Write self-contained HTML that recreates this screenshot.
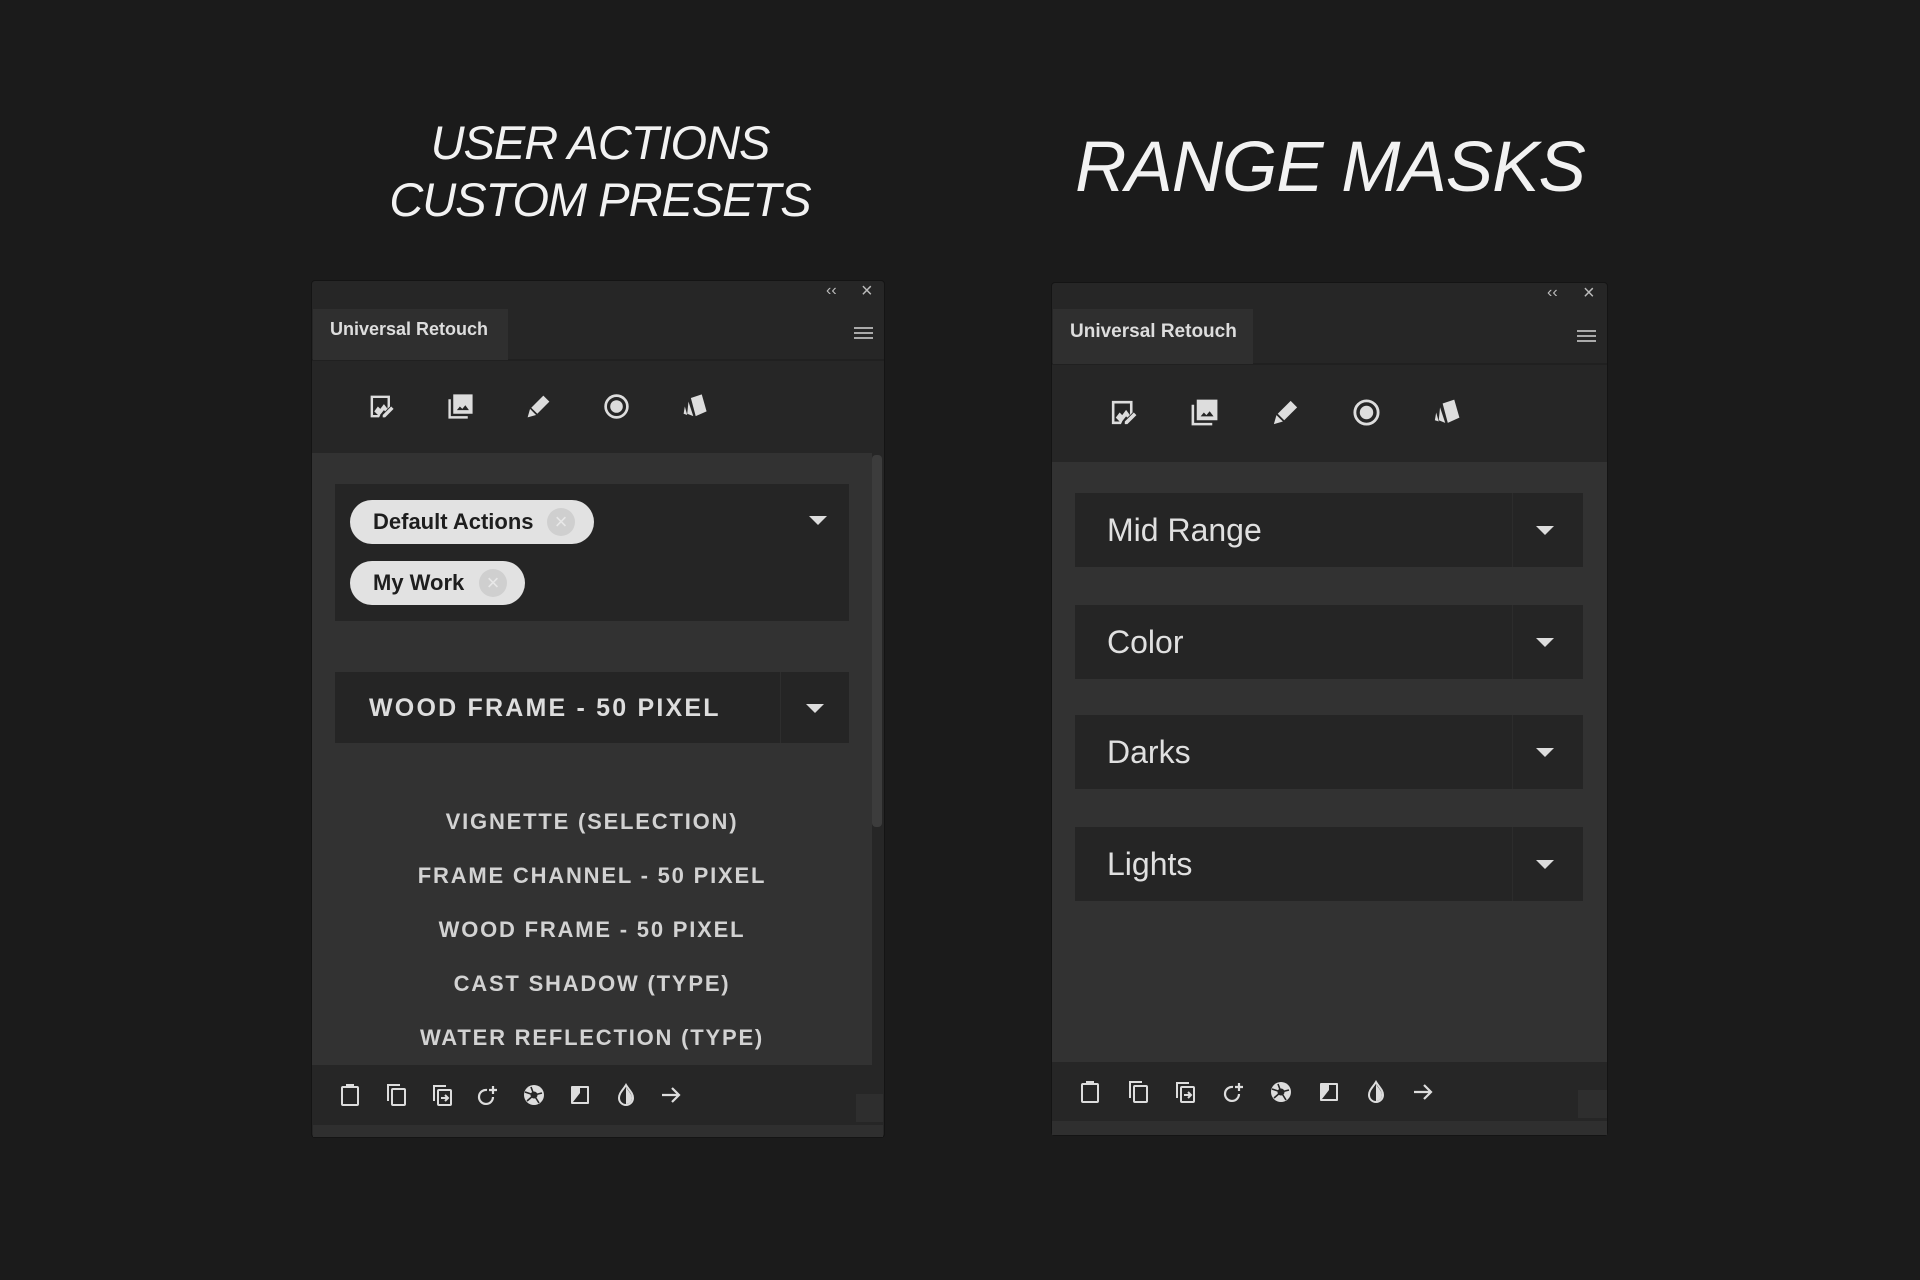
<!DOCTYPE html>
<html><head><meta charset="utf-8">
<style>
*{margin:0;padding:0;box-sizing:border-box}
body{width:1920px;height:1280px;background:#1b1b1b;position:relative;overflow:hidden;font-family:"Liberation Sans",sans-serif}
.a{position:absolute}
.title{color:#f2f2f2;font-style:italic;font-weight:300;text-align:center;letter-spacing:-1px;white-space:nowrap}
.panel{background:#262626;border:1px solid #141414;border-radius:4px}
.ui{color:#ddd;font-weight:bold}
.item{position:absolute;left:335px;width:514px;text-align:center;color:#d2d2d2;font-weight:bold;font-size:22px;letter-spacing:1.8px}
.dd{position:absolute;left:1075px;width:508px;height:74px;background:#252525}
.dd span{position:absolute;left:32px;top:0;line-height:74px;font-size:32px;color:#e0e0e0}
.dd i{position:absolute;left:437px;top:0;width:1px;height:74px;background:#2c2c2c}
.tri{position:absolute;width:0;height:0;border-left:9px solid transparent;border-right:9px solid transparent;border-top:9px solid #ddd}
svg{position:absolute}
</style></head><body>
<div class="a title" style="left:300px;width:600px;top:114px;font-size:47px;line-height:57px">USER ACTIONS<br>CUSTOM PRESETS</div>
<div class="a title" style="left:1020px;width:620px;top:125px;font-size:71px;line-height:86px">RANGE MASKS</div>

<svg width="0" height="0"><defs>
<g id="i1" fill="#ddd"><path d="M3 3h16v9l-2 2V5H5v14h6l-1 2H3z"/><path d="M6 16l3-4 2 2 3-4 3 4-2 2-1-1-4 5z"/><path d="M20 12l2 2-7 7h-2v-2z"/></g>
<g id="i2" fill="#ddd"><path d="M2 6h2v14h14v2H2z"/><path d="M6 2h16v16H6zM9 15h10l-3-4-2.5 3-2-2z" fill-rule="evenodd"/></g>
<g id="i3" fill="#ddd"><path d="M16 3l5 5-10 10-5-5z"/><path d="M5 14l5 5-7 2z"/></g>
<g id="i4"><circle cx="12" cy="12" r="9" fill="none" stroke="#ddd" stroke-width="2.2"/><circle cx="12" cy="12" r="5.2" fill="#ddd"/></g>
<g id="i5" fill="#ddd"><path d="M9 5l9-3 4 14-9 4z"/><path d="M7 8l4 12-5-2z"/><path d="M4 12l2 7-3-1z"/></g>
<g id="f1" fill="none" stroke="#ddd" stroke-width="2"><rect x="4" y="4" width="16" height="18" rx="1"/><path d="M9 4V2h6v2" fill="#ddd"/></g>
<g id="f2" fill="none" stroke="#ddd" stroke-width="2"><rect x="8" y="6" width="13" height="16" rx="1"/><path d="M4 18V2h12"/></g>
<g id="f3" fill="none" stroke="#ddd" stroke-width="2"><rect x="8" y="7" width="13" height="15" rx="1"/><path d="M4 18V3h12"/><path d="M11 15h6m-2-3l3 3-3 3"/></g>
<g id="f4" fill="none" stroke="#ddd" stroke-width="2.2"><path d="M18 14a7 7 0 1 1-6-7"/><path d="M18 3v8M14 7h8"/></g>
<g id="f5"><circle cx="12" cy="12" r="10" fill="#ddd"/><path d="M12 12L9 4M12 12l8-2M12 12l-7 6M12 12l5 8M12 12L3 9" stroke="#262626" stroke-width="1.6"/><circle cx="12" cy="12" r="3.5" fill="#262626"/></g>
<g id="f6"><rect x="3" y="3" width="18" height="18" rx="1" fill="#ddd"/><path d="M12 5h7v14h-7z" fill="#262626"/><path d="M5 19l7-9v9z" fill="#262626"/></g>
<g id="f7"><path d="M12 2C9 7 5 10 5 15a7 7 0 0 0 14 0c0-5-4-8-7-13z" fill="none" stroke="#ddd" stroke-width="2"/><path d="M12 4c2 4 6 7 6 11a6 6 0 0 1-6 6z" fill="#ddd"/></g>
<g id="f8" fill="none" stroke="#ddd" stroke-width="2.2"><path d="M3 12h17M13 5l7 7-7 7"/></g>
</defs></svg>

<!-- LEFT PANEL -->
<div class="a panel" style="left:311px;top:280px;width:574px;height:858px"></div>
<div class="a" style="left:312px;top:309px;width:572px;height:52px;background:#262626;border-bottom:2px solid #202020"></div>
<div class="a" style="left:313px;top:309px;width:195px;height:51px;background:#2f2f2f"></div>
<div class="a ui" style="left:330px;top:317px;font-size:18px;line-height:24px">Universal Retouch</div>
<div class="a" style="left:826px;top:282px;color:#bbb;font-size:16px">&lsaquo;&lsaquo;</div>
<div class="a" style="left:861px;top:280px;color:#bbb;font-size:20px">×</div>
<div class="a" style="left:854px;top:327px;width:19px;height:12px;border-top:2px solid #aaa;border-bottom:2px solid #aaa"></div>
<div class="a" style="left:854px;top:332px;width:19px;height:2px;background:#aaa"></div>
<svg style="left:367px;top:392px" width="29" height="29" viewBox="0 0 24 24"><use href="#i1"/></svg>
<svg style="left:446px;top:392px" width="29" height="29" viewBox="0 0 24 24"><use href="#i2"/></svg>
<svg style="left:524px;top:392px" width="29" height="29" viewBox="0 0 24 24"><use href="#i3"/></svg>
<svg style="left:602px;top:392px" width="29" height="29" viewBox="0 0 24 24"><use href="#i4"/></svg>
<svg style="left:680px;top:392px" width="29" height="29" viewBox="0 0 24 24"><use href="#i5"/></svg>
<div class="a" style="left:312px;top:453px;width:560px;height:612px;background:#323232"></div>
<div class="a" style="left:872px;top:455px;width:10px;height:372px;background:#3c3c3c;border-radius:4px"></div>
<div class="a" style="left:335px;top:484px;width:514px;height:137px;background:#252525"></div>
<div class="a" style="left:350px;top:500px;width:244px;height:44px;border-radius:22px;background:#e2e2e2"></div>
<div class="a" style="left:373px;top:500px;line-height:44px;font-size:22px;font-weight:bold;color:#1e1e1e">Default Actions</div>
<div class="a" style="left:547px;top:508px;width:28px;height:28px;border-radius:50%;background:#cfcfcf;color:#e8e8e8;text-align:center;line-height:28px;font-size:22px">×</div>
<div class="a" style="left:350px;top:561px;width:175px;height:44px;border-radius:22px;background:#e2e2e2"></div>
<div class="a" style="left:373px;top:561px;line-height:44px;font-size:22px;font-weight:bold;color:#1e1e1e">My Work</div>
<div class="a" style="left:479px;top:569px;width:28px;height:28px;border-radius:50%;background:#cfcfcf;color:#e8e8e8;text-align:center;line-height:28px;font-size:22px">×</div>
<div class="tri" style="left:809px;top:516px"></div>
<div class="a" style="left:335px;top:672px;width:514px;height:71px;background:#252525"></div>
<div class="a" style="left:780px;top:672px;width:1px;height:71px;background:#2e2e2e"></div>
<div class="a" style="left:369px;top:673px;line-height:71px;font-size:25px;font-weight:bold;letter-spacing:2.2px;color:#ddd">WOOD FRAME - 50 PIXEL</div>
<div class="tri" style="left:806px;top:704px"></div>
<div class="item" style="top:809px">VIGNETTE (SELECTION)</div>
<div class="item" style="top:863px">FRAME CHANNEL - 50 PIXEL</div>
<div class="item" style="top:917px">WOOD FRAME - 50 PIXEL</div>
<div class="item" style="top:971px">CAST SHADOW (TYPE)</div>
<div class="item" style="top:1025px">WATER REFLECTION (TYPE)</div>
<svg style="left:338px;top:1082px" width="24" height="26" viewBox="0 0 24 24"><use href="#f1"/></svg>
<svg style="left:384px;top:1082px" width="24" height="26" viewBox="0 0 24 24"><use href="#f2"/></svg>
<svg style="left:430px;top:1082px" width="24" height="26" viewBox="0 0 24 24"><use href="#f3"/></svg>
<svg style="left:475px;top:1083px" width="24" height="24" viewBox="0 0 24 24"><use href="#f4"/></svg>
<svg style="left:522px;top:1083px" width="24" height="24" viewBox="0 0 24 24"><use href="#f5"/></svg>
<svg style="left:568px;top:1083px" width="24" height="24" viewBox="0 0 24 24"><use href="#f6"/></svg>
<svg style="left:614px;top:1083px" width="24" height="24" viewBox="0 0 24 24"><use href="#f7"/></svg>
<svg style="left:659px;top:1083px" width="24" height="24" viewBox="0 0 24 24"><use href="#f8"/></svg>
<div class="a" style="left:856px;top:1094px;width:27px;height:28px;background:#2e2e2e"></div>
<div class="a" style="left:313px;top:1125px;width:570px;height:12px;background:#2f2f2f"></div>

<!-- RIGHT PANEL -->
<div class="a panel" style="left:1051px;top:282px;width:557px;height:854px"></div>
<div class="a" style="left:1052px;top:309px;width:555px;height:56px;background:#262626;border-bottom:2px solid #202020"></div>
<div class="a" style="left:1053px;top:309px;width:200px;height:55px;background:#2f2f2f"></div>
<div class="a ui" style="left:1070px;top:320px;font-size:19px;line-height:24px">Universal Retouch</div>
<div class="a" style="left:1547px;top:284px;color:#bbb;font-size:16px">&lsaquo;&lsaquo;</div>
<div class="a" style="left:1583px;top:282px;color:#bbb;font-size:20px">×</div>
<div class="a" style="left:1577px;top:330px;width:19px;height:12px;border-top:2px solid #aaa;border-bottom:2px solid #aaa"></div>
<div class="a" style="left:1577px;top:335px;width:19px;height:2px;background:#aaa"></div>
<svg style="left:1108px;top:397px" width="31" height="31" viewBox="0 0 24 24"><use href="#i1"/></svg>
<svg style="left:1189px;top:397px" width="31" height="31" viewBox="0 0 24 24"><use href="#i2"/></svg>
<svg style="left:1270px;top:397px" width="31" height="31" viewBox="0 0 24 24"><use href="#i3"/></svg>
<svg style="left:1351px;top:397px" width="31" height="31" viewBox="0 0 24 24"><use href="#i4"/></svg>
<svg style="left:1431px;top:397px" width="31" height="31" viewBox="0 0 24 24"><use href="#i5"/></svg>
<div class="a" style="left:1052px;top:462px;width:555px;height:600px;background:#323232"></div>
<div class="dd" style="top:493px"><span>Mid Range</span><i></i><div class="tri" style="left:461px;top:33px"></div></div>
<div class="dd" style="top:605px"><span>Color</span><i></i><div class="tri" style="left:461px;top:33px"></div></div>
<div class="dd" style="top:715px"><span>Darks</span><i></i><div class="tri" style="left:461px;top:33px"></div></div>
<div class="dd" style="top:827px"><span>Lights</span><i></i><div class="tri" style="left:461px;top:33px"></div></div>
<svg style="left:1078px;top:1079px" width="24" height="26" viewBox="0 0 24 24"><use href="#f1"/></svg>
<svg style="left:1126px;top:1079px" width="24" height="26" viewBox="0 0 24 24"><use href="#f2"/></svg>
<svg style="left:1173px;top:1079px" width="24" height="26" viewBox="0 0 24 24"><use href="#f3"/></svg>
<svg style="left:1221px;top:1080px" width="24" height="24" viewBox="0 0 24 24"><use href="#f4"/></svg>
<svg style="left:1269px;top:1080px" width="24" height="24" viewBox="0 0 24 24"><use href="#f5"/></svg>
<svg style="left:1317px;top:1080px" width="24" height="24" viewBox="0 0 24 24"><use href="#f6"/></svg>
<svg style="left:1364px;top:1080px" width="24" height="24" viewBox="0 0 24 24"><use href="#f7"/></svg>
<svg style="left:1411px;top:1080px" width="24" height="24" viewBox="0 0 24 24"><use href="#f8"/></svg>
<div class="a" style="left:1578px;top:1090px;width:29px;height:28px;background:#2e2e2e"></div>
<div class="a" style="left:1052px;top:1121px;width:555px;height:14px;background:#2f2f2f"></div>
</body></html>
